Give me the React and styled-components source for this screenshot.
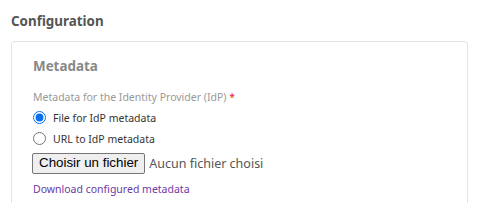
import React, { useState } from "react";
import styled, { createGlobalStyle } from "styled-components";

const GlobalStyle = createGlobalStyle`
  body {
    margin: 0;
    background: #ffffff;
    font-family: "Noto Sans", "Open Sans", sans-serif;
  }
`;

function App() {
  const [source, setSource] = useState("file");

  return (
    <Page>
      <GlobalStyle />
      <SectionTitle>Configuration</SectionTitle>
      <Card>
        <CardTitle>Metadata</CardTitle>
        <FieldLabel>
          Metadata for the Identity Provider (IdP) <Required>*</Required>
        </FieldLabel>
        <RadioGroup>
          <RadioRow>
            <Radio
              type="radio"
              name="source"
              checked={source === "file"}
              onChange={() => setSource("file")}
            />
            File for IdP metadata
          </RadioRow>
          <RadioRow>
            <Radio
              type="radio"
              name="source"
              checked={source === "url"}
              onChange={() => setSource("url")}
            />
            URL to IdP metadata
          </RadioRow>
        </RadioGroup>
        <FilePicker>
          <FileButton type="button">Choisir un fichier</FileButton>
          <FileName>Aucun fichier choisi</FileName>
        </FilePicker>
        <DownloadLink href="#">Download configured metadata</DownloadLink>
      </Card>
    </Page>
  );
}

export default App;

const Page = styled.div`
  padding: 11px 10px 0 11px;
`;

const SectionTitle = styled.h2`
  margin: 0 0 10px;
  font-size: 13.4px;
  line-height: 20px;
  font-weight: 700;
  color: #555555;
`;

const Card = styled.div`
  width: 457px;
  box-sizing: border-box;
  height: 162px;
  border: 1px solid #e4e4e4;
  border-bottom: none;
  border-radius: 4px 4px 0 0;
  padding: 14px 21px 0;
  display: flex;
  flex-direction: column;
  align-items: flex-start;
`;

const CardTitle = styled.h3`
  margin: 0 0 14px;
  font-size: 13.4px;
  line-height: 20px;
  font-weight: 700;
  color: #888888;
`;

const FieldLabel = styled.div`
  font-size: 10.5px;
  line-height: 15px;
  color: #999999;
`;

const Required = styled.span`
  color: #e0162b;
`;

const RadioGroup = styled.div`
  display: flex;
  flex-direction: column;
  margin-top: 2px;
`;

const RadioRow = styled.label`
  display: flex;
  align-items: center;
  height: 21px;
  font-size: 10.5px;
  color: #333333;
`;

const Radio = styled.input`
  width: 13px;
  height: 13px;
  margin: 0 7px 0 0;
  accent-color: #0b6ff0;
`;

const FilePicker = styled.div`
  display: flex;
  align-items: center;
  margin-top: 4px;
  margin-left: -1px;
`;

const FileButton = styled.button`
  font-family: "Liberation Sans", Arial, sans-serif;
  font-size: 13.33px;
  line-height: 16px;
  color: #000000;
  background: #efefef;
  border: 1px solid #767676;
  border-radius: 2px;
  padding: 1px 6px 2px;
  margin-right: 4px;
`;

const FileName = styled.span`
  font-size: 12.5px;
  color: #555555;
`;

const DownloadLink = styled.a`
  margin-top: 8px;
  font-size: 10.5px;
  line-height: 15px;
  color: #6b3aa8;
  text-decoration: none;
`;
